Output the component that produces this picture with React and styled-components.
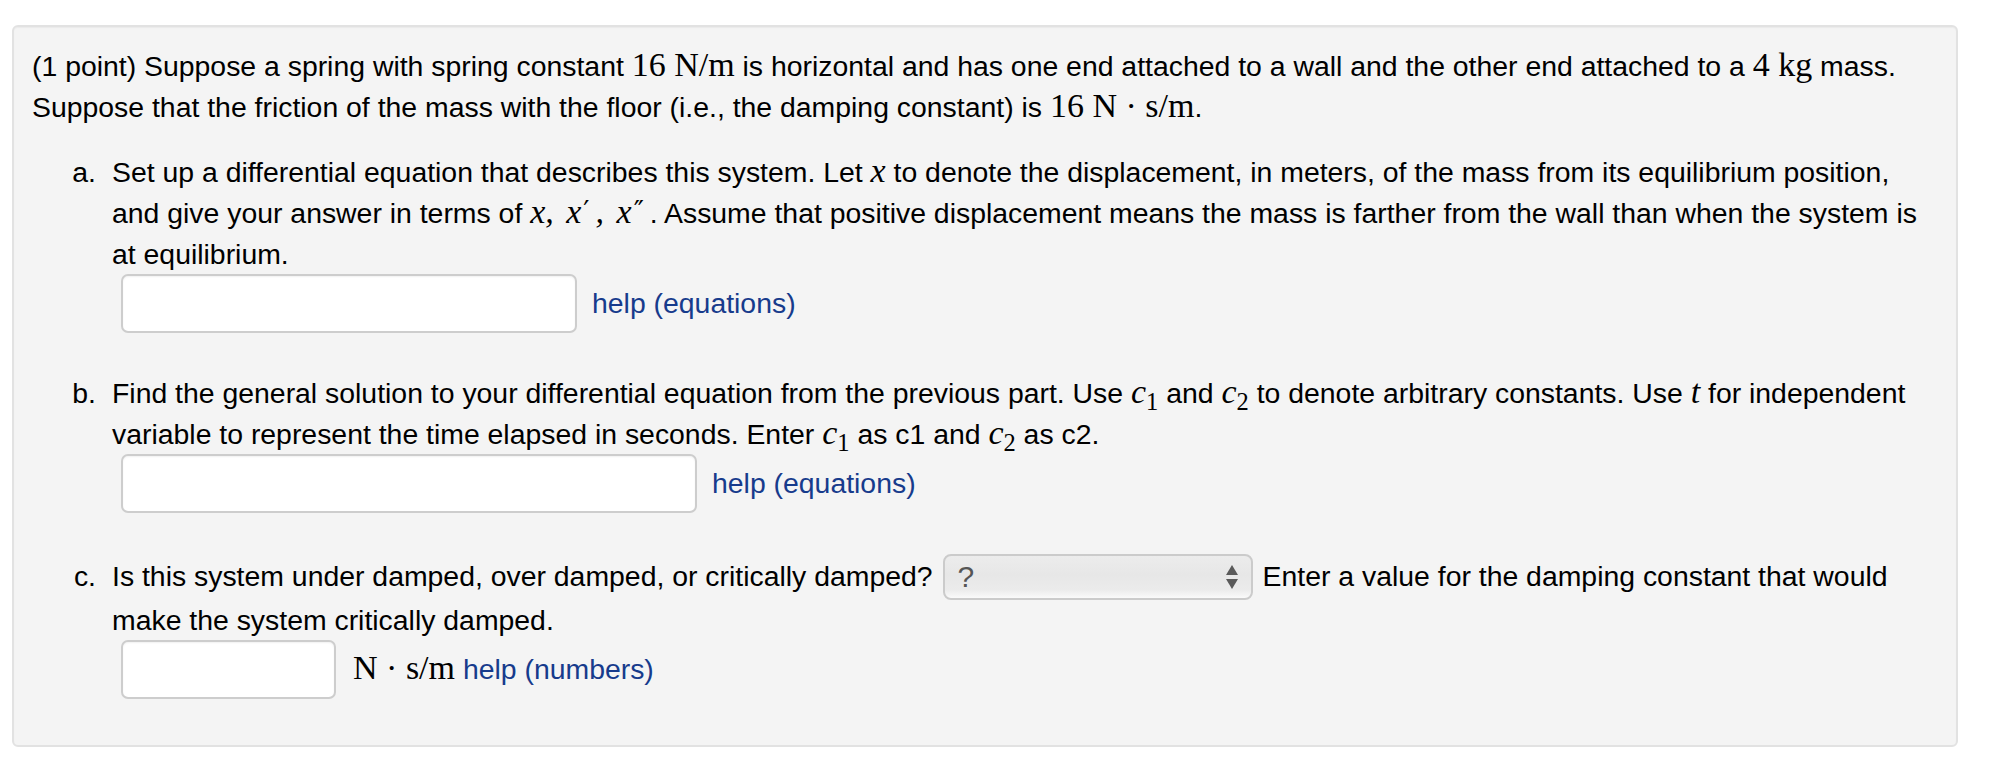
import styled, { createGlobalStyle } from "styled-components";

const GlobalStyle = createGlobalStyle`
  body {
    margin: 0;
    background: #fff;
  }
`;

const Page = styled.div`
  padding: 25px 40px 17px 12px;
`;

const Panel = styled.div`
  background: #f4f4f4;
  border: 2px solid #e2e2e2;
  border-radius: 6px;
  box-shadow: inset 0 1px 1px rgba(0, 0, 0, 0.04);
  padding: 19px 18px 46px;
  font-family: "Liberation Sans", Arial, Helvetica, sans-serif;
  font-size: 28.4px;
  line-height: 41px;
  color: #000;
`;

const Intro = styled.p`
  margin: 0 0 24px;
  white-space: nowrap;
`;

const Parts = styled.ol`
  list-style: none;
  margin: 0;
  padding: 0;
  display: flex;
  flex-direction: column;
  gap: 40px;
`;

const Part = styled.li`
  display: grid;
  grid-template-columns: 80px 1fr;
  align-items: start;
`;

const Marker = styled.span`
  text-align: right;
  padding-right: 16px;
  line-height: ${({ $tall }) => ($tall ? "47px" : "41px")};
`;

const Body = styled.div`
  display: flex;
  flex-direction: column;
`;

const Text = styled.div`
  white-space: nowrap;
`;

const QuestionLine = styled.div`
  display: flex;
  align-items: center;
  gap: 10px;
  height: 47px;
  white-space: nowrap;
`;

const Row = styled.div`
  display: flex;
  align-items: center;
  gap: ${({ $gap }) => $gap || 15}px;
  padding-left: 9px;
  margin-top: -1px;
  white-space: nowrap;
`;

const Answer = styled.input`
  box-sizing: border-box;
  width: ${({ $w }) => $w}px;
  height: 59px;
  margin: 0;
  background: #fff;
  border: 2px solid #cdcdcd;
  border-radius: 7px;
  box-shadow: inset 0 1px 2px rgba(0, 0, 0, 0.06);
  font: inherit;
  outline: none;
`;

const HelpLink = styled.a`
  color: #173b8c;
  text-decoration: none;
  cursor: pointer;
`;

const Math = styled.span`
  font-family: "Liberation Serif", "Times New Roman", serif;
  font-size: 34px;
  line-height: 1;
  font-style: ${({ $italic }) => ($italic ? "italic" : "normal")};
`;

const Sub = styled.sub`
  font-style: normal;
  font-size: 0.72em;
  line-height: 0;
  vertical-align: -0.28em;
`;

const Prime = styled.span`
  font-family: "DejaVu Sans", sans-serif;
  font-style: normal;
  font-size: 0.8em;
  line-height: 0;
  vertical-align: 0.12em;
  margin: 0 6px 0 2px;
`;

const Comma = styled.span`
  margin-right: 4px;
`;

const SelectBox = styled.div`
  box-sizing: border-box;
  display: flex;
  align-items: center;
  justify-content: space-between;
  width: 310px;
  height: 46px;
  padding: 0 12px 0 13px;
  border: 2px solid #cbcbcb;
  border-radius: 8px;
  background: linear-gradient(
    to bottom,
    #ececec 0%,
    #e7e7e7 45%,
    #ebebeb 80%,
    #fafafa 100%
  );
  color: #555;
  font-size: 30px;
`;

const Arrows = () => (
  <svg width="14" height="26" viewBox="0 0 14 26">
    <polygon points="7,1 13,11 1,11" fill="#5a5a5a" />
    <polygon points="1,15 13,15 7,25" fill="#5a5a5a" />
  </svg>
);

const C = ({ n }) => (
  <Math $italic>
    c<Sub>{n}</Sub>
  </Math>
);

export default function App() {
  return (
    <>
      <GlobalStyle />
      <Page>
        <Panel>
          <Intro>
            (1 point) Suppose a spring with spring constant <Math>16 N/m</Math> is horizontal and
            has one end attached to a wall and the other end attached to a <Math>4 kg</Math> mass.
            <br />
            Suppose that the friction of the mass with the floor (i.e., the damping constant) is{" "}
            <Math>16 N · s/m</Math>.
          </Intro>

          <Parts>
            <Part>
              <Marker>a.</Marker>
              <Body>
                <Text>
                  Set up a differential equation that describes this system. Let <Math $italic>x</Math> to
                  denote the displacement, in meters, of the mass from its equilibrium position,
                  <br />
                  and give your answer in terms of{" "}
                  <Math $italic>
                    x<Comma>,</Comma> x<Prime>′</Prime>
                    <Comma>,</Comma> x<Prime>″</Prime>
                  </Math>
                  . Assume that positive displacement means the mass is farther from the wall than when
                  the system is
                  <br />
                  at equilibrium.
                </Text>
                <Row>
                  <Answer $w={456} />
                  <HelpLink>help (equations)</HelpLink>
                </Row>
              </Body>
            </Part>

            <Part>
              <Marker>b.</Marker>
              <Body>
                <Text>
                  Find the general solution to your differential equation from the previous part. Use{" "}
                  <C n="1" /> and <C n="2" /> to denote arbitrary constants. Use <Math $italic>t</Math> for
                  independent
                  <br />
                  variable to represent the time elapsed in seconds. Enter <C n="1" /> as c1 and{" "}
                  <C n="2" /> as c2.
                </Text>
                <Row>
                  <Answer $w={576} />
                  <HelpLink>help (equations)</HelpLink>
                </Row>
              </Body>
            </Part>

            <Part>
              <Marker $tall>c.</Marker>
              <Body>
                <QuestionLine>
                  <span>Is this system under damped, over damped, or critically damped?</span>
                  <SelectBox>
                    <span>?</span>
                    <Arrows />
                  </SelectBox>
                  <span>Enter a value for the damping constant that would</span>
                </QuestionLine>
                <Text>make the system critically damped.</Text>
                <Row $gap={17}>
                  <Answer $w={215} />
                  <span>
                    <Math>N · s/m</Math> <HelpLink>help (numbers)</HelpLink>
                  </span>
                </Row>
              </Body>
            </Part>
          </Parts>
        </Panel>
      </Page>
    </>
  );
}
